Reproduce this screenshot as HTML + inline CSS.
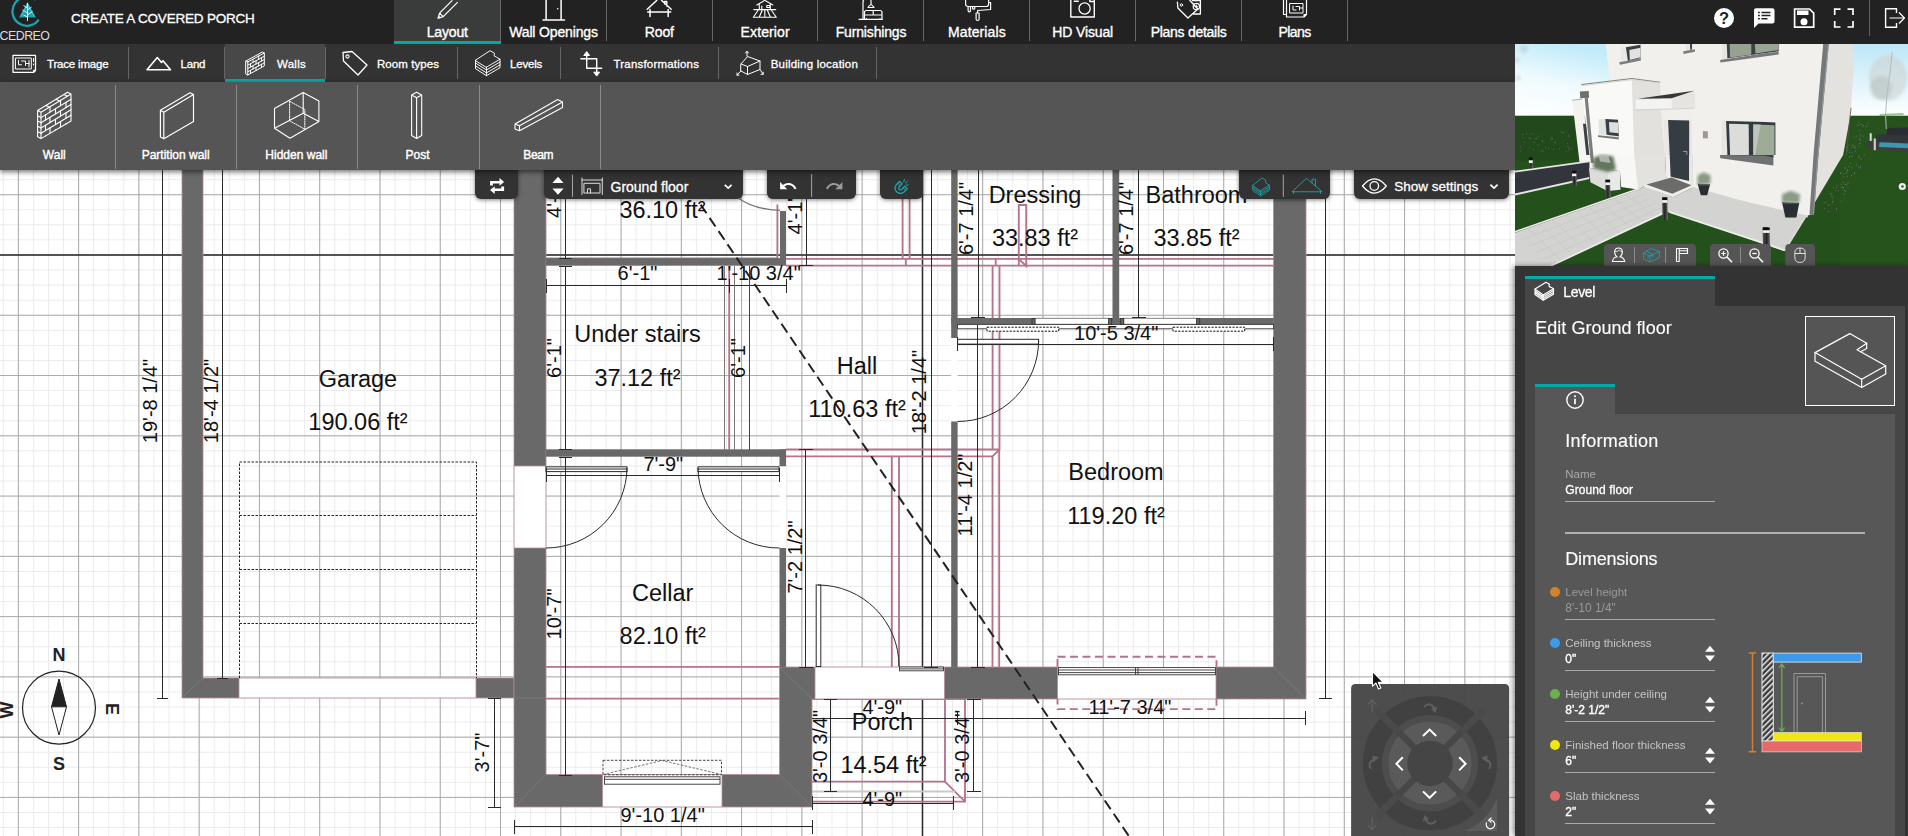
<!DOCTYPE html>
<html><head><meta charset="utf-8"><title>Cedreo</title>
<style>
*{box-sizing:border-box;margin:0;padding:0}
html,body{width:1908px;height:836px;overflow:hidden;background:#fff;font-family:"Liberation Sans",sans-serif;color:#fff}
.abs{position:absolute}
#top{position:absolute;left:0;top:0;width:1908px;height:44px;background:#222}
#bar2{position:absolute;left:0;top:44px;width:1515px;height:38px;background:#333}
#bar3{position:absolute;left:0;top:82px;width:1515px;height:88px;background:#555;box-shadow:0 2px 5px rgba(0,0,0,.55);z-index:5}
#canvas{position:absolute;left:0;top:170px;width:1515px;height:666px;background:#fff;overflow:hidden}
#view3d{position:absolute;left:1515px;top:44px;width:393px;height:222px;background:#cfe6f2;overflow:hidden;z-index:6}
#panel{position:absolute;left:1515px;top:266px;width:393px;height:570px;background:#333;box-shadow:-2px 0 5px rgba(0,0,0,.45);z-index:6}
.title{position:absolute;left:71px;top:10px;font-size:13.5px;line-height:17px;white-space:nowrap;letter-spacing:-0.2px;-webkit-text-stroke:0.3px #fff}
.tab{position:absolute;top:0;height:44px;width:106px;text-align:center}
.tab .lbl{position:absolute;left:-20px;right:-20px;top:23px;font-size:14px;line-height:18px;white-space:nowrap;text-align:center;letter-spacing:-0.15px;-webkit-text-stroke:0.35px #fff}
.tab.act{background:#3a3c3c;border-bottom:3px solid #00aaa5}
.sep{position:absolute;width:1px;background:#666}
.t2{position:absolute;top:0;height:38px}
.t2 .lbl{position:absolute;top:12px;font-size:11.5px;line-height:16px;white-space:nowrap;letter-spacing:-0.19px;-webkit-text-stroke:0.3px #fff}
.t2.act{background:#484848;border-bottom:3px solid #00aaa5}
.t3{position:absolute;top:0;height:88px;width:121px}
.t3 .lbl{position:absolute;left:0;right:0;top:65.5px;font-size:12px;line-height:15px;text-align:center;white-space:nowrap;-webkit-text-stroke:0.4px #fff}
svg{display:block;overflow:visible}
.ic{position:absolute;fill:none;stroke:#fff;stroke-width:1.2;stroke-linejoin:round;stroke-linecap:round}
.ftb{position:absolute;top:-6px;height:35.4px;background:#333;border-radius:0 0 6px 6px;box-shadow:0 1px 4px rgba(0,0,0,.5);z-index:2}
.pt{white-space:nowrap;-webkit-text-stroke:0.3px #fff}
.dot{position:absolute;left:1550px;width:10px;height:10px;border-radius:50%}
.fl{left:1565.3px;font-size:11.5px;line-height:14px;color:#c4c4c4;white-space:nowrap}
.fv{left:1565.3px;font-size:12px;line-height:14px;color:#fff;white-space:nowrap;-webkit-text-stroke:0.35px #fff}
.ul{position:absolute;left:1565px;width:150px;height:1px;background:#aaa}
.ft{white-space:nowrap;line-height:18px;-webkit-text-stroke:0.3px #fff;z-index:3}
</style></head><body>
<div id="top">
<svg class="abs" style="left:0;top:0" width="60" height="44" viewBox="0 0 60 44">
<path d="M35.8 -0.2A14.5 14.5 0 1 0 38.8 19.7" fill="none" stroke="#1aa3b0" stroke-width="2.3"/>
<path d="M27.5 2L19 17.5H36Z" fill="#1a9fb0"/>
<path d="M27.5 3V21M27.5 8L23.5 5.5M27.5 10L31.5 7M27.5 13L22.5 10M27.5 15L32.5 11.5M27.5 17L23.5 15" stroke="#e8e8e8" stroke-width="1" fill="none"/>
<path d="M27.5 4L21 16.5M27.5 4L34 16.5" stroke="#cfe" stroke-width=".5" fill="none" opacity=".7"/>
<text x="-0.5" y="40" font-size="13.6" fill="#ddd" font-family="Liberation Sans, sans-serif" letter-spacing="-0.55" textLength="50" lengthAdjust="spacingAndGlyphs" style="font-weight:normal">CEDREO</text>
</svg>

<div class="title">CREATE A COVERED PORCH</div>
<div class="tab act" style="left:394px;width:106.5px"><svg class="ic" style="left:0;top:0" width="106" height="44" viewBox="394 0 106 44"><path d="M438 18.3l1.6-5.2L452 0.7M438 18.3l5.2-1.7L457.5 2.3M439.6 13.1l3.6 3.5M438.6 16.3l1.6 1.5" /></svg><div class="lbl">Layout</div></div>
<div class="tab" style="left:500.5px"><svg class="ic" style="left:0;top:0" width="106" height="44" viewBox="500.5 0 106 44"><path d="M545.6 0V19.6M560.6 0V19.6M542.5 20H564" stroke-width="1.5"/><circle cx="557.2" cy="8.8" r=".8" fill="#fff" stroke="none"/></svg><div class="lbl">Wall Openings</div></div>
<div class="tab" style="left:606.3px"><svg class="ic" style="left:0;top:0" width="106" height="44" viewBox="606.3 0 106 44"><path d="M647.5 9.3L657 0.5M671.5 9.3L662 0.5M650.3 9.5V16.6M668.5 9.5V16.6M648 12H671M665 4V1.5H667V6" stroke-width="1.5"/></svg><div class="lbl">Roof</div></div>
<div class="tab" style="left:712.2px"><svg class="ic" style="left:0;top:0" width="106" height="44" viewBox="712.2 0 106 44"><path d="M754 9.6H776M753.5 17.2H776.5M753.5 17.2L758.5 10M776.5 17.2L771.5 10M759.5 17L762.5 10M770.5 17L767.5 10M765 17V10M757 5L765 0.3L773 5M759.5 4.5V9.5M770.5 4.5V9.5M762 6V9.5M767 5.5H770V7.5H767Z" stroke-width="1.1"/></svg><div class="lbl" style="letter-spacing:0.12px">Exterior</div></div>
<div class="tab" style="left:818px"><svg class="ic" style="left:0;top:0" width="106" height="44" viewBox="818 0 106 44"><path d="M859 19.3H882.5M863 19V2Q863 -1 866 -1M871 0V4.5M868 7.5Q871 2 874 7.5ZM864.5 18.5V12.5Q864.5 10.5 866.5 10.5H880Q882 10.5 882 12.5V18.5M864.5 15H882M873.2 10.5V15M866.5 18.5V19.3M880 18.5V19.3" stroke-width="1.2"/></svg><div class="lbl">Furnishings</div></div>
<div class="tab" style="left:923.9px"><svg class="ic" style="left:0;top:0" width="106" height="44" viewBox="923.9 0 106 44"><path d="M965.5 0V4Q965.5 6.5 968 6.5H986Q988.5 6.5 988.5 4V0M968 6.5V10.5Q968 11.8 969.2 11.8Q970.4 11.8 970.4 10.5V6.5M972.5 6.5V8.2Q972.5 9.2 973.6 9.2Q974.7 9.2 974.7 8.2V6.5M988.5 2.5H990.5V9.5L977.5 10.5V13M976 13H979V19Q979 20.5 977.5 20.5Q976 20.5 976 19Z" stroke-width="1.2"/></svg><div class="lbl" style="letter-spacing:0.11px">Materials</div></div>
<div class="tab" style="left:1029.7px"><svg class="ic" style="left:0;top:0" width="106" height="44" viewBox="1029.7 0 106 44"><path d="M1070.5 0V17H1094V0M1074 1.2H1078M1089.5 0V1.5H1094" stroke-width="1.4"/><circle cx="1084.3" cy="8.5" r="5.6" stroke-width="1.3"/></svg><div class="lbl">HD Visual</div></div>
<div class="tab" style="left:1135.6px"><svg class="ic" style="left:0;top:0" width="106" height="44" viewBox="1135.6 0 106 44"><path d="M1177 2.2L1177.5 8L1187.5 18L1197.5 9L1189.5 0.5M1192 0.5H1200V14H1193" stroke-width="1.3"/><circle cx="1181" cy="5" r="1.2" stroke-width="1"/><circle cx="1196" cy="6.5" r="3.2" stroke-width="1.2"/><path d="M1196 5v3M1194.5 6.5h3" stroke-width=".9"/></svg><div class="lbl" style="letter-spacing:-0.27px">Plans details</div></div>
<div class="tab" style="left:1241.5px"><svg class="ic" style="left:0;top:0" width="106" height="44" viewBox="1241.5 0 106 44"><path d="M1283 0V14.5H1286M1286 0.5V17H1303.5L1306 14.5V0.5M1303.5 17V14.5H1306" stroke-width="1.2"/><path d="M1289.5 3.5H1302.5V13H1289.5ZM1292.5 6V10H1295.5M1295.5 6.5H1299V10M1299 8H1302" stroke-width="1"/></svg><div class="lbl" style="letter-spacing:-0.57px">Plans</div></div>
<div class="sep" style="left:500px;top:0;height:41px"></div>
<div class="sep" style="left:606px;top:0;height:41px"></div>
<div class="sep" style="left:712px;top:0;height:41px"></div>
<div class="sep" style="left:817px;top:0;height:41px"></div>
<div class="sep" style="left:923px;top:0;height:41px"></div>
<div class="sep" style="left:1029px;top:0;height:41px"></div>
<div class="sep" style="left:1135px;top:0;height:41px"></div>
<div class="sep" style="left:1241px;top:0;height:41px"></div>
<div class="sep" style="left:1347px;top:0;height:41px"></div>

<svg class="abs" style="left:1700px;top:0" width="208" height="44" viewBox="1700 0 208 44">
<circle cx="1724" cy="18" r="10" fill="#fff"/>
<text x="1724" y="24" font-size="16.5" font-weight="bold" fill="#222" text-anchor="middle" font-family="Liberation Sans, sans-serif">?</text>
<path d="M1756 8.2H1772.5Q1774.5 8.2 1774.5 10.2V21.5Q1774.5 23.5 1772.5 23.5H1758.5L1754 28V10.2Q1754 8.2 1756 8.2Z" fill="#fff"/>
<path d="M1758 12.5h1.8M1761.5 12.5h9M1758 15.6h1.8M1761.5 15.6h9M1758 18.7h1.8M1761.5 18.7h6" stroke="#222" stroke-width="1.5" fill="none"/>
<path d="M1794.6 9H1809.5L1813.7 13.2V27.2H1794.6Z" fill="none" stroke="#fff" stroke-width="1.7"/>
<rect x="1797" y="10.5" width="11.5" height="4.5" fill="#fff"/>
<circle cx="1804" cy="21.8" r="3.5" fill="#fff"/>
<path d="M1834.7 15V9.2H1840.5M1847.5 9.2H1853V15M1853 21V27H1847.5M1840.5 27H1834.7V21" fill="none" stroke="#fff" stroke-width="1.7"/>
<path d="M1869.6 0V36" stroke="#666" stroke-width="1"/>
<path d="M1896.5 13V8.8H1885.6V27.3H1896.5V23" fill="none" stroke="#fff" stroke-width="1.4"/>
<path d="M1889.5 18H1904M1899 12.5L1904.5 18L1899 23.5" fill="none" stroke="#fff" stroke-width="1.2"/>
</svg>

</div>
<div id="bar2">
<div class="t2 act" style="left:224.5px;width:100.3px"></div>
<svg class="ic" style="left:0;top:0" width="1515" height="38" viewBox="0 44 1515 38">
<!-- trace image -->
<path d="M13 55.3H35.5V70.5L33.7 72.3H13Z M33.7 72.3V70.5H35.5" stroke-width="1.3"/>
<path d="M15.8 58H31.3V69H15.8ZM18.5 60.5V64.8H21.5M21.5 61H25.5V65.5M25.5 63.5H29M29 60.5V67" stroke-width="1"/>
<path d="M33.5 58.5v3M33.5 64v1" stroke-width="1"/>
<!-- land -->
<path d="M147 69.8L157.3 57.5L161.5 62.5L163 60.8L170.5 69.8Z" stroke-width="1.6"/>
<!-- walls (brick) -->
<g stroke-width="1">
<path d="M246 61L262.5 52L264.3 53V66L247.8 75L246 74ZM247.8 62V75M247.8 62L264.3 53M246 61L247.8 62"/>
<path d="M247.8 65.2L264.3 56.2M247.8 68.5L264.3 59.5M247.8 71.8L264.3 62.8M253 59.2V62.4M258.7 56V59.2M250.5 63.8V67M256 60.8V64M261.5 57.8V61M253 65.8V69M258.7 62.7V66M250.5 70.4V73.6M256 67.3V70.6M261.5 64.3V67.6"/>
</g>
<!-- room types tag -->
<path d="M343 52.5L352 51.5L367 65L358 75L343.5 61Z" stroke-width="1.3"/><circle cx="347.5" cy="56.5" r="1.6" stroke-width="1.1"/>
<!-- levels -->
<g stroke-width="0.95" transform="translate(0,-1.3)">
<path d="M475.5 61.5L490 52L494.5 54.5Q492.5 57.5 496.5 58.5L500 60.5L486.5 68.5Z"/>
<path d="M475.5 61.5V70L486.5 77L500 69V60.5M486.5 68.5V77M475.5 64.3L486.5 71.3L500 63.3M475.5 67.2L486.5 74.2L500 66.2"/>
</g>
<!-- transformations -->
<g stroke-width="1.4">
<path d="M586.7 54.5V68.3H601.7M580.8 58.7H596.7V73.5"/>
<path d="M584 55.2L586.7 51.6L589.4 55.2Z" fill="#fff" stroke-width="1"/>
<path d="M594 72.5L596.7 76.1L599.4 72.5Z" fill="#fff" stroke-width="1"/>
</g>
<!-- building location -->
<g stroke-width="1">
<path d="M741 64L747.5 56.5L760 61V69.5L747.5 74.5L741 71ZM741 64L747.5 66.5V74.5M747.5 66.5L760 61M747.5 56.5"/>
<path d="M747 56V51.5M745.5 53L747 51.2L748.5 53M741 71L737 75M737 73V75.2H739M760 69.5L763 74M761 74.3H763.2V72.2"/>
</g>
</svg>
<div class="t2" style="left:0"><div class="lbl" style="left:47px">Trace image</div></div>
<div class="t2" style="left:0"><div class="lbl" style="left:180.5px">Land</div></div>
<div class="t2" style="left:0"><div class="lbl" style="left:277px;letter-spacing:0.26px">Walls</div></div>
<div class="t2" style="left:0"><div class="lbl" style="left:377px;letter-spacing:0.06px">Room types</div></div>
<div class="t2" style="left:0"><div class="lbl" style="left:510px">Levels</div></div>
<div class="t2" style="left:0"><div class="lbl" style="left:613.5px;letter-spacing:0.20px">Transformations</div></div>
<div class="t2" style="left:0"><div class="lbl" style="left:770.7px;letter-spacing:0.21px">Building location</div></div>
<div class="sep" style="left:127.5px;top:3px;height:32px"></div>
<div class="sep" style="left:224px;top:3px;height:32px"></div>
<div class="sep" style="left:324.5px;top:3px;height:32px"></div>
<div class="sep" style="left:457.3px;top:3px;height:32px"></div>
<div class="sep" style="left:560.4px;top:3px;height:32px"></div>
<div class="sep" style="left:718px;top:3px;height:32px"></div>
<div class="sep" style="left:876px;top:3px;height:32px"></div>

</div>
<div id="bar3">
<svg class="ic" style="left:0;top:0" width="1515" height="88" viewBox="0 82 1515 88">
<!-- wall -->
<g stroke-width="1.1">
<path d="M37.6 110.5L67.6 92.3L71 94V121L41 138.6L37.6 136.8ZM41 112.3V138.6M41 112.3L71 94M37.6 110.5L41 112.3"/>
<path d="M41 117.6L71 99.3M41 122.8L71 104.5M41 128L71 109.8M41 133.3L71 115.2"/>
<path d="M50 106.8V112M60.5 100.5V105.7M45.5 114.8V120M55.5 108.7V114M66 102.4V107.6M50 117.3V122.6M60.5 111V116.2M45.5 125.3V130.6M55.5 119.2V124.5M66 112.8V118M50 127.8V133M60.5 121.5V126.7M45.5 135.7V136M55.5 129.7V130M66 123.4V124"/>
<path d="M37.6 115.8L41 117.6M37.6 121L41 122.8M37.6 126.2L41 128M37.6 131.5L41 133.3M46 105.4L49.4 107.2M56 99.3L59.5 101M64 94.5L67.4 96.2"/>
</g>
<!-- partition wall -->
<g stroke-width="1.2">
<path d="M160.4 110.3L190 92.8L193.5 94.6V121.5L163.8 138.8L160.4 137ZM163.8 112.2V138.8M163.8 112.2L193.5 94.6M160.4 110.3L163.8 112.2"/>
</g>
<!-- hidden wall -->
<g stroke-width="1.1">
<path d="M303.2 92.4L274.5 108.4V128.2L290 138.3L318.9 121.6V100.9ZM303.2 92.4V113.2L274.5 128.2M303.2 113.2L318.9 121.6"/>
<path d="M289.6 101.3L304.8 109.5V129.2L289.6 120.8Z" stroke-dasharray="1.2 1.2" stroke-width="1"/>
</g>
<!-- post -->
<g stroke-width="1.1">
<path d="M411.6 95L416.6 92.2L421.7 95V135.6L416.6 138.5L411.6 135.6ZM411.6 95L416.6 97.8L421.7 95M416.6 97.8V138.5"/>
</g>
<!-- beam -->
<g stroke-width="1.1">
<path d="M515 124L557.7 99.6L562.5 102V107.5L519.5 130.7L515 129ZM515 124L519.5 125.8V130.7M519.5 125.8L562.5 102"/>
</g>
</svg>
<div class="t3" style="left:-6.2px"><div class="lbl">Wall</div></div>
<div class="t3" style="left:115.2px"><div class="lbl">Partition wall</div></div>
<div class="t3" style="left:235.9px"><div class="lbl">Hidden wall</div></div>
<div class="t3" style="left:357px"><div class="lbl">Post</div></div>
<div class="t3" style="left:477.7px"><div class="lbl" style="letter-spacing:-0.4px">Beam</div></div>
<div class="sep" style="left:115.3px;top:3px;height:84px;background:#8a8a8a"></div>
<div class="sep" style="left:236.3px;top:3px;height:84px;background:#8a8a8a"></div>
<div class="sep" style="left:357.4px;top:3px;height:84px;background:#8a8a8a"></div>
<div class="sep" style="left:478.5px;top:3px;height:84px;background:#8a8a8a"></div>
<div class="sep" style="left:599.5px;top:3px;height:84px;background:#8a8a8a"></div>

</div>
<div id="canvas">
<svg width="1515" height="666" viewBox="0 170 1515 666" style="position:absolute;left:0;top:0" font-family="Liberation Sans, sans-serif">
<defs>
<pattern id="gmin" patternUnits="userSpaceOnUse" x="921.9" y="254.5" width="15.0675" height="15.0675">
<path d="M0.5 0V15.07M0 0.5H15.07" stroke="#ebebeb" stroke-width="1" fill="none"/>
</pattern>
<pattern id="gmed" patternUnits="userSpaceOnUse" x="921.9" y="254.5" width="60.27" height="60.27">
<path d="M0.5 0V60.27M0 0.5H60.27" stroke="#a9a9a9" stroke-width="1" fill="none"/>
</pattern>
</defs>
<rect x="0" y="170" width="1515" height="666" fill="#fff"/>
<rect x="0" y="170" width="1515" height="666" fill="url(#gmin)"/>
<rect x="0" y="170" width="1515" height="666" fill="url(#gmed)"/>
<path d="M0 254.9H1515M922.5 170V836" stroke="#2b2b2b" stroke-width="1.5" fill="none"/>

<!-- ghost (pink) lines of other level -->
<g stroke="#b3748b" stroke-width="1.85" fill="none">
<path d="M786 258.8H1274M786 265.6H1274"/>
<path d="M902.6 170V258.8M909.6 170V258.8M905.8 258.8V265.6M995.7 258.8V265.6M777.4 204.6V258.4H546"/>
<path d="M992.6 265.6V450M999.5 265.6V450"/>
<path d="M1018.8 266V205H1026.2V266L1018.8 259"/>
<path d="M786 449.5H1000M786 456.3H992.5L999.5 449.5"/>
<path d="M891.8 456.3V667M899 456.3V667"/>
<path d="M992.5 456.3V667M999.2 449.5V667"/>
<path d="M729.2 266V449.5"/>
<path d="M546 666.8H779.5M546 698.6H779.5"/>
<path d="M812 699H965V801.6H812"/>
<path d="M812 781.6H945V699"/>
<path d="M945 781.6L965 801.6"/>
<path d="M812 791.5H955" stroke="#c9c9c9"/>
</g>
<rect x="1057.5" y="656.8" width="159" height="52.3" fill="none" stroke="#b3748b" stroke-width="1.9" stroke-dasharray="8 4.5"/>

<g fill="#fff"><rect x="514" y="466" width="32" height="82"/><rect x="239" y="678" width="237" height="20"/><rect x="602.5" y="774.5" width="119.5" height="32.5"/><rect x="815" y="667" width="129.5" height="32"/><rect x="1057.5" y="667" width="158.5" height="32"/><rect x="779.5" y="466" width="6.5" height="82"/><rect x="951.2" y="338" width="6.4" height="83.5"/></g>
<!-- walls -->
<g fill="#696969" stroke="#b88a9a" stroke-width="0.8">
<!-- garage left + bottom -->
<path d="M182 165H203V678H239V698H182Z"/>
<path d="M476 678H514V698H476Z"/>
<!-- centre wall -->
<path d="M514 165H546V466H514Z"/>
<path d="M514 548H546V774.5H602.5V807H514Z"/>
<!-- cellar bottom right + right thick wall + hall bottom piece -->
<path d="M722 774.5H779.5V667H815V699H812V807H722Z"/>
<!-- hall/bedroom bottom -->
<path d="M944.5 667H1057.5V699H944.5Z"/>
<path d="M1216 667H1273.5V165H1306V699H1216Z"/>
</g>
<g fill="#696969" stroke="none">
<!-- thin interior walls -->
<path d="M546 258H786V211H780V258.5H546Z"/>
<rect x="546" y="258.3" width="240" height="7.4"/>
<rect x="780" y="211" width="6" height="54"/>
<rect x="546" y="449.3" width="240" height="7.4"/>
<rect x="779.5" y="449.3" width="6.5" height="17"/>
<rect x="779.5" y="548" width="6.5" height="119"/>
<rect x="951.2" y="165" width="6.4" height="173"/>
<rect x="951.2" y="421.5" width="6.4" height="246"/>
<rect x="1112.5" y="165" width="6.7" height="159"/>
<rect x="951.2" y="318" width="84" height="6.4"/>
<rect x="1108.7" y="318" width="15" height="6.4"/>
<rect x="1196.7" y="318" width="77" height="6.4"/>
</g>
<path d="M239 678H476M239 698H476M514 466V548M546 466V548M602.5 774.5H722M602.5 807H722M815 667H944.5M815 699H944.5M1057.5 699H1216" stroke="#b88a9a" stroke-width="0.9" fill="none"/>
<!-- wall joints -->
<g stroke="#7c7c7c" stroke-width="0.8" fill="none">
<path d="M182 698L203 678M514 807L546 774.5M812 807L779.5 774.5M1306 699L1273.5 667M779.5 667L812 699M514 678V698M514 698H546"/>
</g>

<!-- openings: garage door -->
<g fill="none" stroke="#222" stroke-width="1" stroke-dasharray="2.5 1.5">
<path d="M239.5 678V462H476.5V678M239.5 515.5H476.5M239.5 569.5H476.5M239.5 623.5H476.5"/>
</g>
<!-- cellar window -->
<g fill="none" stroke="#333" stroke-width="0.9">
<rect x="603" y="760.3" width="118.5" height="14.5" stroke-dasharray="2.5 1.5"/>
<path d="M603 774.5L662 760.5L721.5 774.5" stroke-dasharray="2.5 1.5" stroke="#666"/>
<rect x="604.5" y="776.8" width="115.5" height="7.4" fill="#fff"/>
<path d="M604.5 779.3H720"/>
</g>
<!-- bedroom window -->
<g fill="#fff" stroke="#333" stroke-width="0.9">
<rect x="1058.5" y="667.6" width="157" height="7.2"/>
<path d="M1058.5 670H1215.5M1058.5 672.6H1215.5M1135.5 667.6V674.8M1138 667.6V674.8" fill="none"/>
</g>
<!-- small hall door/window element -->
<g fill="#fff" stroke="#333" stroke-width="0.9">
<rect x="899.5" y="667" width="44" height="3.8"/>
<path d="M899.5 668.9H943.5" fill="none"/>
</g>
<!-- doors -->
<g fill="#fff" stroke="#2a2a2a" stroke-width="1">
<rect x="546" y="466.8" width="81" height="4.8"/>
<path d="M546 469H627" fill="none"/>
<path d="M627 468A81 81 0 0 1 546 548" fill="none"/>
<rect x="698" y="466.8" width="81" height="4.8"/>
<path d="M698 469H779" fill="none"/>
<path d="M698 468A81 81 0 0 0 779.5 548" fill="none"/>
<rect x="816.2" y="585" width="4.6" height="81.5"/>
<path d="M818 585A81 81 0 0 1 899 666.5" fill="none"/>
<rect x="957.6" y="339.3" width="81" height="4.8"/>
<path d="M1038.6 340A81 81 0 0 1 957.6 421.5" fill="none"/>
<path d="M739 198.5Q754 209.5 780 210.3" fill="none" stroke="#777" stroke-width="1.3"/>
</g>
<!-- sliding doors in dressing/bath wall -->
<g fill="#fff" stroke="#333" stroke-width="0.9">
<rect x="1035" y="318.3" width="73.7" height="6" stroke="#777"/>
<rect x="1123.7" y="318.3" width="73" height="6" stroke="#777"/>
<rect x="957.6" y="324.4" width="316" height="4.4"/>
<rect x="987" y="327.2" width="71.7" height="4" stroke="#111" stroke-dasharray="2.2 1.3" stroke-width="1"/>
<rect x="1173" y="327.2" width="71.7" height="4" stroke="#111" stroke-dasharray="2.2 1.3" stroke-width="1"/>
<rect x="1032" y="318.5" width="3" height="5.8" fill="#696969"/>
<rect x="1108.7" y="318.5" width="3" height="5.8" fill="#696969"/>
<rect x="1120.7" y="318.5" width="3" height="5.8" fill="#696969"/>
<rect x="1196.7" y="318.5" width="3" height="5.8" fill="#696969"/>
</g>

<!-- dimension lines -->
<g stroke="#2a2a2a" stroke-width="1" fill="none" shape-rendering="crispEdges">
<path d="M162.5 170V698M157 698H168"/>
<path d="M222.5 170V678M217 678H228"/>
<path d="M565.5 170V258M559 258H572M565.5 266V449.3M559 266H572M559 449.3H572M565.5 457V775M559 457H572M559 775H572"/>
<path d="M546 285.6H786.6M546 279V292.6M729.2 279V292.6M786.6 279V292.6"/>
<path d="M806 170V265.6M799 265.6H813"/>
<path d="M749.3 266V449.5" stroke="#444" stroke-width="1.3"/>
<path d="M724.7 266V449.5M734 266V449.5" stroke="#777"/>
<path d="M931 170V667M924 667H938"/>
<path d="M978 170V317.5M971 317.5H985"/>
<path d="M1138.8 170V317.5M1132 317.5H1146"/>
<path d="M957.6 344.3H1273.7M957.6 337V351M1273.7 337V351"/>
<path d="M546 475H779.5M546 468V482M779.5 468V482"/>
<path d="M805.8 449.5V667M799 449.5H813M799 667H813"/>
<path d="M977.5 325V667M971 667H985"/>
<path d="M1325.5 170V698M1319 698H1332"/>
<path d="M494.5 698.5V807M488 698.5H501M488 807H501"/>
<path d="M514 826.5H812M514 819.5V833.5M812 819.5V833.5"/>
<path d="M812 718.4H1305.5M1305.5 711V725M957 711V725"/>
<path d="M830.7 699V791M824 699H837M824 791H837"/>
<path d="M973.5 699V791M967 699H981M967 791H981"/>
<path d="M812 803H953.5M953.5 796V810M812 796V810"/>
</g>
<path d="M700.6 204.6L1128.8 836" stroke="#222" stroke-width="2" stroke-dasharray="10.5 5.5" fill="none"/>

<!-- labels -->
<g fill="#111" font-size="23.5" text-anchor="middle">
<text x="358" y="386.5">Garage</text><text x="358" y="429.5">190.06 ft²</text>
<text x="662.5" y="217.5">36.10 ft²</text>
<text x="637.5" y="342">Under stairs</text><text x="637.5" y="385.5">37.12 ft²</text>
<text x="857" y="373.5">Hall</text><text x="857" y="416.5">110.63 ft²</text>
<text x="1035" y="203">Dressing</text><text x="1035" y="246">33.83 ft²</text>
<text x="1196.5" y="203">Bathroom</text><text x="1196.5" y="246">33.85 ft²</text>
<text x="1116" y="479.5">Bedroom</text><text x="1116" y="524">119.20 ft²</text>
<text x="662.7" y="601">Cellar</text><text x="662.7" y="643.7">82.10 ft²</text>
<text x="882.5" y="729.5">Porch</text><text x="883.5" y="773">14.54 ft²</text>
</g>
<g fill="#111" font-size="20" text-anchor="middle">
<text x="637.5" y="280.4">6'-1"</text>
<text x="758.6" y="280.4">1'-10 3/4"</text>
<text x="1116.2" y="340">10'-5 3/4"</text>
<text x="663.3" y="471">7'-9"</text>
<text x="882.3" y="713.5">4'-9"</text>
<text x="882.3" y="806">4'-9"</text>
<text x="662.6" y="821.7">9'-10 1/4"</text>
<text x="1130" y="714.3">11'-7 3/4"</text>
<text transform="translate(157,401) rotate(-90)">19'-8 1/4"</text>
<text transform="translate(218,401) rotate(-90)">18'-4 1/2"</text>
<text transform="translate(560.5,198) rotate(-90)">4'-1"</text>
<text transform="translate(802,214.5) rotate(-90)">4'-1"</text>
<text transform="translate(560.5,358) rotate(-90)">6'-1"</text>
<text transform="translate(744.7,358) rotate(-90)">6'-1"</text>
<text transform="translate(925.5,392) rotate(-90)">18'-2 1/4"</text>
<text transform="translate(972.5,218.5) rotate(-90)">6'-7 1/4"</text>
<text transform="translate(1133.3,218.5) rotate(-90)">6'-7 1/4"</text>
<text transform="translate(972,495) rotate(-90)">11'-4 1/2"</text>
<text transform="translate(801.5,557) rotate(-90)">7'-2 1/2"</text>
<text transform="translate(560.5,614) rotate(-90)">10'-7"</text>
<text transform="translate(489,752.5) rotate(-90)">3'-7"</text>
<text transform="translate(827,746.5) rotate(-90)">3'-0 3/4"</text>
<text transform="translate(969,746.5) rotate(-90)">3'-0 3/4"</text>
</g>

<!-- compass -->
<g>
<circle cx="59" cy="707.7" r="36.5" fill="none" stroke="#222" stroke-width="1.2"/>
<path d="M59 679L51.5 706.8H66.5Z" fill="#222" stroke="#222" stroke-width="1"/>
<path d="M59 735L51.5 706.8H66.5Z" fill="#fff" stroke="#222" stroke-width="1"/>
<g font-size="18" font-weight="bold" fill="#222" text-anchor="middle">
<text x="59" y="661">N</text><text x="59" y="770">S</text>
<text transform="translate(106,709) rotate(90)">E</text>
<text transform="translate(13,710) rotate(-90)">W</text>
</g>
</g>
</svg>
<!-- floating toolbars -->
<div class="ftb" style="left:475.3px;width:43px"></div>
<div class="ftb" style="left:543.5px;width:199.5px"></div>
<div class="ftb" style="left:767px;width:88.7px"></div>
<div class="ftb" style="left:880.3px;width:43px"></div>
<div class="ftb" style="left:1239.3px;width:90.5px"></div>
<div class="ftb" style="left:1354.3px;width:154.7px"></div>
<svg class="abs" style="left:0;top:0;z-index:3" width="1515" height="40" viewBox="0 170 1515 40" fill="none" stroke="#fff" stroke-linecap="round" stroke-linejoin="round">
<!-- swap -->
<path d="M490.1 181.1H499.5V178L504.1 181.9L499.5 185.8V183.4H492.9V185.6H490.1ZM504.1 190.9H494.7V194L490.1 190.1L494.7 186.2V188.6H501.3V186.4H504.1Z" fill="#fff" stroke="none"/>
<!-- level selector -->
<path d="M558 176.8L563.6 183H552.4ZM558 194.7L563.6 188.5H552.4Z" fill="#fff" stroke="none"/>
<path d="M572.5 175V196.5" stroke="#a5a5a5" stroke-width="1"/>
<g stroke-width="1" stroke="#ddd"><path d="M582 178V194.5M602.3 178V194.5M582 180H602.3M584.3 183.3H600V193H584.3ZM587.5 193V188.8H590.5V193"/></g>
<path d="M724.8 184.8L728.2 188.2L731.6 184.8" stroke-width="1.7" stroke-linecap="butt"/>
<!-- undo / redo -->
<path transform="translate(778.5,176.5) scale(0.8)" d="M12.5 8c-2.65 0-5.05.99-6.9 2.6L2 7v9h9l-3.62-3.62c1.39-1.16 3.16-1.88 5.12-1.88 3.54 0 6.55 2.31 7.6 5.5l2.37-.78C21.08 11.03 17.15 8 12.5 8z" fill="#fff" stroke="none"/>
<path d="M811.6 174.5V196.5" stroke="#a5a5a5" stroke-width="1"/>
<path transform="translate(824.8,176.5) scale(0.8)" d="M18.4 10.6C16.55 8.99 14.15 8 11.5 8c-4.65 0-8.58 3.03-9.96 7.22L3.9 16c1.05-3.19 4.05-5.5 7.6-5.5 1.95 0 3.73.72 5.12 1.88L13 16h9V7l-3.6 3.6z" fill="#999" stroke="none"/>
<!-- magnet -->
<g stroke="#1aa5ad" stroke-width="1.3">
<path d="M899.5 181.5L896.3 184.8Q893.5 188.5 896.7 191.8Q900.2 195 904 192L907.2 188.8L904.7 186.3L901.6 189.4Q900.2 190.5 899.1 189.3Q898 188 899.2 186.8L902.2 183.9Z"/>
<path d="M897.8 183.3L900.5 185.8M903.2 188L905.7 190.4M904.5 179.5L903.5 182M907.5 181.2L905.3 183M908.3 184.8L906 185.2" stroke-width="1"/>
</g>
<!-- layers (teal) -->
<g stroke="#1aa5ad" stroke-width="0.8">
<path d="M1252.8 185.3L1262 178L1266 180.3Q1264 182.8 1267 183.6L1269.4 185L1260.5 190.5Z"/>
<path d="M1252.8 185.3V190.5L1260.5 195.8L1269.4 190.3V185M1260.5 190.5V195.8M1252.8 187L1260.5 192.3L1269.4 186.8M1252.8 188.8L1260.5 194L1269.4 188.6"/>
</g>
<path d="M1283.3 175V196.5" stroke="#a5a5a5" stroke-width="1"/>
<!-- roof (teal) -->
<g stroke="#1aa5ad" stroke-width="0.9">
<path d="M1292.3 191.5L1306.5 178.3L1321.7 191.5ZM1312 183V179.2H1315.5V186.2M1293.5 191.5V193.5M1320.5 191.5V193.5"/>
</g>
<!-- eye -->
<g stroke-width="1.3"><path d="M1362.5 186Q1374.3 171.8 1386.3 186Q1374.3 200.2 1362.5 186Z"/><circle cx="1374.3" cy="186" r="4.3"/></g>
<path d="M1490.4 184.6L1494 188.2L1497.6 184.6" stroke-width="1.7" stroke-linecap="butt"/>
</svg>
<div class="abs ft" style="left:610.5px;top:8px;font-size:14px">Ground floor</div>
<div class="abs ft" style="left:1394.3px;top:8.3px;font-size:13.5px">Show settings</div>
<!-- nav widget -->
<svg class="abs" style="left:1340px;top:500px;z-index:3" width="175" height="166" viewBox="1340 670 175 166">
<defs><clipPath id="navc"><rect x="1351" y="684" width="158.2" height="152"/></clipPath></defs>
<path d="M1351.1 836V688.5Q1351.1 684 1355.6 684H1504.6Q1509.1 684 1509.1 688.5V836Z" fill="#474747" opacity=".97"/>
<g clip-path="url(#navc)">
<path d="M1363 696H1398Q1370 708 1363 733Z" fill="#4d4d4d"/>
<path d="M1363 831H1398Q1370 819 1363 794Z" fill="#4d4d4d"/>
<path d="M1497 831V798Q1488 822 1464 831Z" fill="#5b5b5b"/>
<circle cx="1430" cy="763.3" r="67" fill="#4a4a4a"/>
<circle cx="1430" cy="763.3" r="57.5" fill="none" stroke="#414141" stroke-width="19"/>
<circle cx="1430" cy="763.3" r="45" fill="none" stroke="#4d4d4d" stroke-width="6"/>
<path d="M1377 710.3L1483 816.3M1483 710.3L1377 816.3" stroke="#4a4a4a" stroke-width="7"/>
<circle cx="1430" cy="763.3" r="32.2" fill="none" stroke="#5a5a5a" stroke-width="19.2"/>
<path d="M1398 731.3L1462 795.3M1462 731.3L1398 795.3" stroke="#474747" stroke-width="6.5"/>
<circle cx="1430" cy="763.3" r="22.6" fill="#454545"/>
<g fill="none" stroke="#fff" stroke-width="2">
<path d="M1423 736L1429.6 729.6L1436.2 736"/><path d="M1423 791.4L1429.6 797.8L1436.2 791.4"/>
<path d="M1402.8 757.2L1396.4 763.8L1402.8 770.4"/><path d="M1459.2 757.2L1465.6 763.8L1459.2 770.4"/>
</g>
<g fill="none" stroke="#5f5f5f" stroke-width="1.3">
<path d="M1372.2 712V700M1368 704.2L1372.2 700L1376.4 704.2"/>
<path d="M1372.2 817.5V829.5M1368 825.3L1372.2 829.5L1376.4 825.3"/>
<path d="M1424 707Q1430 701 1434 708" stroke-width="2"/><path d="M1431 709L1435.5 713L1437.5 706.5Z" fill="#5f5f5f" stroke="none"/>
<path d="M1436 821Q1430 827 1426 820" stroke-width="2"/><path d="M1429 819L1424.5 815L1422.5 821.5Z" fill="#5f5f5f" stroke="none"/>
<path d="M1371 769Q1367 763 1374 759.5" stroke-width="2"/><path d="M1373 762.5L1379 757.5L1372.5 755.5Z" fill="#5f5f5f" stroke="none"/>
<path d="M1489 769Q1493 763 1486 759.5" stroke-width="2"/><path d="M1487 762.5L1481 757.5L1487.5 755.5Z" fill="#5f5f5f" stroke="none"/>
</g>
<path d="M1486.6 822.6A4.3 4.3 0 1 0 1490.3 820.2" fill="none" stroke="#fff" stroke-width="1.2"/><path d="M1491.5 817.8L1488.6 820.3L1491.5 822.6" fill="none" stroke="#fff" stroke-width="1.2"/>
</g>
</svg>
<!-- cursor -->
<svg class="abs" style="left:1370px;top:500px;z-index:4" width="16" height="22" viewBox="0 0 16 22"><path d="M2.5 1.5V16.2L6 13L8.5 19L10.8 18L8.3 12.2H13Z" fill="#111" stroke="#fff" stroke-width="1.1" stroke-linejoin="round"/></svg>

</div>
<div id="view3d">
<svg class="abs" style="left:0;top:0" width="393" height="222" viewBox="0 0 393 222">
<defs>
<linearGradient id="sky" x1="0" y1="1" x2="0.35" y2="0"><stop offset="0" stop-color="#ffffff"/><stop offset="0.5" stop-color="#f1fbfe"/><stop offset="1" stop-color="#c2ebf9"/></linearGradient>
<linearGradient id="sky2" x1="0" y1="0" x2="0" y2="1"><stop offset="0" stop-color="#bce7f8"/><stop offset="1" stop-color="#ffffff"/></linearGradient>
<linearGradient id="lamp" x1="0" y1="0" x2="1" y2="0"><stop offset="0" stop-color="#555"/><stop offset="0.5" stop-color="#222"/><stop offset="1" stop-color="#777"/></linearGradient>
<filter id="b1"><feGaussianBlur stdDeviation="0.5"/></filter>
<filter id="b2"><feGaussianBlur stdDeviation="1.6"/></filter>
</defs>
<rect width="393" height="222" fill="#24501c"/>
<rect width="120" height="72" fill="url(#sky)"/>
<rect x="330" width="63" height="72" fill="url(#sky2)"/>
<g filter="url(#b1)">
<rect x="0" y="71.7" width="62" height="45" fill="#244a1b"/>
<rect x="325" y="71.7" width="68" height="150.3" fill="#27531e"/>
<g fill="#b9c0c0" opacity=".45" filter="url(#b2)"><circle cx="9" cy="5" r="4"/><circle cx="2" cy="16" r="2.5"/><circle cx="3" cy="34" r="2.5"/></g>
<g filter="url(#b2)"><ellipse cx="373" cy="34" rx="19" ry="23" fill="#cfd6d5" opacity=".7"/><ellipse cx="366" cy="44" rx="11" ry="12" fill="#b4bdbb" opacity=".5"/></g>
<polyline points="371.3,85.0 370.6,71.7 371.9,50.5 375.3,26.6 377.2,8.0" fill="none" stroke="#b4bab9" stroke-width="1" />
<polyline points="364.6,71.0 388.5,70.1" fill="none" stroke="#6fae6a" stroke-width="2" opacity=".7"/>
<polygon points="352.7,96.9 393.0,98.9 393.0,108.2 352.7,104.9" fill="#3a3d3f" />
<polygon points="364.6,98.2 393.0,99.6 393.0,104.2 364.0,102.9" fill="#3f97ab" />
<polygon points="361.3,90.3 393.0,91.6 393.0,98.9 361.3,96.9" fill="#33363a" />
<polygon points="372.6,83.9 393.0,83.4 393.0,91.6 371.3,90.9" fill="#2b2e31" />
<polygon points="354.7,89.2 356.7,89.2 356.7,96.9 354.7,96.9" fill="#ddd" />
<polygon points="358.7,94.5 360.9,94.5 360.9,106.2 358.7,106.2" fill="#ccc" />
<polygon points="176.6,140.9 250.0,160.4 292.9,169.4 292.9,173.4 250.0,165.4 176.6,145.5" fill="#d3d3d1" />
<polygon points="90.9,0.0 250.0,0.0 309.5,0.0 296.7,170.7 291.6,171.4 200.0,150.8 177.9,142.9 177.9,111.0 94.3,111.0 94.3,34.5" fill="#f1f0ec" />
<polygon points="312.9,0.0 337.4,0.0 338.7,23.9 335.4,71.7 328.1,111.0 298.9,160.1 298.2,169.4" fill="#e3e2de" />
<polyline points="336.1,63.7 334.8,74.3 331.4,111.0" fill="none" stroke="#555" stroke-width="0.8" />
<polygon points="308.2,0.0 313.9,0.0 303.6,111.0 298.9,170.7 294.5,170.7 298.5,111.0" fill="#747878" />
<polyline points="313.3,0.0 302.9,111.0 298.5,170.7" fill="none" stroke="#9a9e9e" stroke-width="0.9" />
<polygon points="105.5,3.3 125.5,0.0 125.5,14.6 105.5,18.6" fill="#e9e8e4" />
<polygon points="110.9,3.3 125.5,0.7 125.5,13.9 112.9,17.3" fill="#3a4045" />
<polygon points="114.4,6.0 125.5,3.7 125.5,13.3 114.8,15.9" fill="#e2e2e0" />
<polygon points="104.2,18.3 125.9,14.3 125.9,16.6 104.9,20.8" fill="#7b7b79" />
<polygon points="170.6,0.0 177.2,0.0 177.2,6.0 170.6,6.6" fill="#e6e5e1" />
<polygon points="175.0,0.0 177.0,0.0 177.0,5.6 175.3,5.8" fill="#3a4045" />
<polygon points="168.3,7.3 179.9,5.3 179.9,7.7 168.6,10.0" fill="#7b7b79" />
<polygon points="207.1,0.0 250.0,0.0 263.7,0.0 263.7,7.7 205.3,16.2 207.1,13.9" fill="#e6e5e1" />
<polygon points="211.8,0.0 250.0,0.0 263.7,0.0 263.7,7.3 212.6,14.3 212.4,14.3" fill="#3a4045" />
<polygon points="214.8,0.0 236.3,0.0 236.3,10.4 215.1,13.3" fill="#99a392" />
<polygon points="239.8,0.0 263.5,0.0 263.5,6.0 240.5,9.6" fill="#9aa693" />
<polygon points="214.9,0.0 235.8,0.0 235.8,10.4 214.9,13.3" fill="#98a291" />
<polygon points="205.1,15.9 250.0,9.3 263.7,7.7 263.7,10.4 205.3,18.6 205.5,18.6" fill="#77777a" />
<polygon points="57.1,56.0 67.7,54.7 74.3,111.0 63.7,111.0" fill="#f4f3f0" />
<polyline points="57.1,56.3 67.0,55.0" fill="none" stroke="#999" stroke-width="0.8" />
<polygon points="66.4,40.9 117.5,35.2 120.2,111.0 74.3,111.0" fill="#f9f9f7" />
<polygon points="116.8,35.2 145.1,38.8 146.0,63.7 150.0,111.0 119.2,111.0" fill="#e2e1de" />
<polyline points="66.4,40.6 116.8,34.7 145.1,38.4" fill="none" stroke="#858583" stroke-width="1.3" />
<polygon points="66.4,40.9 116.8,34.9 145.1,38.6 145.1,39.8 116.8,36.2 67.0,42.2" fill="#d8d8d5" />
<polygon points="63.7,111.0 120.2,111.0 124.1,145.8 106.2,142.9 104.9,126.9 74.3,124.3 74.3,117.4 64.5,118.3" fill="#f7f7f5" />
<polygon points="119.2,111.0 150.0,111.0 151.4,137.6 129.4,142.2 123.2,145.8" fill="#e3e2df" />
<polygon points="146.0,65.1 178.6,64.4 178.6,111.0 150.0,111.0" fill="#f0efeb" />
<polygon points="150.0,111.0 177.9,111.0 177.9,142.9 156.7,132.9 151.4,137.6" fill="#f0efeb" />
<polygon points="64.8,47.5 73.7,47.1 74.1,53.8 65.3,54.2" fill="#6e6e6c" />
<polygon points="69.7,53.8 72.8,53.8 78.3,111.0 75.0,111.0" fill="#7d7d7b" />
<polygon points="75.0,111.0 78.3,111.0 79.0,119.0 75.9,119.0" fill="#7d7d7b" />
<polygon points="68.0,79.7 71.0,79.7 74.3,111.0 71.3,111.0" fill="#3a4045" />
<polygon points="83.6,75.0 102.9,75.7 103.8,92.9 83.9,90.3" fill="#e3e3e0" />
<polygon points="90.3,75.1 103.0,75.8 103.8,92.3 91.6,90.7" fill="#384046" />
<polygon points="94.0,78.1 103.0,78.6 103.6,89.2 94.5,88.2" fill="#dededf" />
<polygon points="83.0,91.3 103.8,93.2 103.8,95.6 83.0,92.9" fill="#777" />
<polygon points="120.6,55.5 156.7,54.7 156.9,64.4 120.6,65.3" fill="#f3f3f1" />
<polygon points="156.7,54.7 179.9,46.7 180.3,63.5 156.9,64.4" fill="#e5e4e1" />
<polygon points="122.8,54.7 177.2,47.1 179.2,46.7 156.7,54.2" fill="#37393b" />
<polygon points="120.6,65.3 156.9,64.4 180.3,63.5 178.6,64.8 146.0,66.0 120.6,66.4" fill="#d5d4d0" />
<polygon points="148.4,75.7 176.6,76.3 177.2,111.0 150.0,111.0" fill="#e8e7e3" />
<polygon points="153.1,75.9 174.2,76.6 174.2,111.0 154.7,111.0" fill="#363e43" />
<polygon points="154.7,111.0 174.2,111.0 174.2,136.9 156.7,132.9 155.6,132.2" fill="#363e43" />
<polygon points="174.2,111.0 177.2,111.0 177.6,142.2 174.2,136.9" fill="#e8e7e3" />
<polyline points="168.0,107.5 171.9,107.5 171.9,111.0" fill="none" stroke="#aaa" stroke-width="0.8" />
<polygon points="187.9,87.0 192.8,87.2 192.8,94.5 187.9,94.3" fill="#9a9a98" />
<polygon points="206.5,76.3 250.0,77.7 260.8,78.3 260.8,111.0 206.5,111.0" fill="#e7e6e2" />
<polygon points="211.1,77.0 250.0,78.1 260.4,78.6 260.4,111.0 212.4,111.0" fill="#333b40" />
<polygon points="214.0,79.7 233.7,80.2 233.9,111.0 215.1,111.0" fill="#dcdcdb" />
<polygon points="238.2,80.6 259.5,81.3 259.5,111.0 238.2,111.0" fill="#9dab97" />
<polygon points="238.3,80.5 245.6,80.6 240.3,111.0 238.3,111.0" fill="#bfc4bd" />
<polygon points="205.1,111.0 250.0,111.0 258.4,111.0 258.4,121.6 205.3,114.3 205.1,113.4" fill="#6f7173" />
<polygon points="209.8,111.0 250.0,111.0 258.4,111.0 258.4,113.4 250.0,111.7" fill="#3b4246" />
<polygon points="0.0,126.7 74.3,116.6 74.3,134.9 0.0,151.5" fill="#e6e6e4" />
<polygon points="0.0,128.5 74.3,118.3 74.3,132.9 0.0,149.5" fill="#33363b" />
<polygon points="74.3,124.3 104.9,126.9 105.5,145.8 92.9,147.1 75.7,138.2" fill="#e9e9e7" />
<polygon points="74.3,124.3 92.9,128.9 92.9,147.1 75.7,138.2" fill="#dcdcda" />
<g filter="url(#b2)"><polygon points="78.3,113.7 86.3,111.0 98.2,112.3 100.9,125.6 92.9,128.3 78.3,124.3" fill="#5d7055" opacity=".95"/></g>
<polygon points="83.6,111.0 92.9,111.0 95.6,119.0 85.0,117.6" fill="#bfc2bd" opacity=".8"/>
<polygon points="0.0,188.7 122.8,145.8 129.4,142.6 158.0,153.2 178.6,143.3 250.0,163.0 291.6,171.4 269.7,206.9 200.0,183.4 152.7,167.8 34.8,222.0 0.0,222.0" fill="#d3d3d1" />
<polyline points="7.0,195.3 128.8,150.2" fill="none" stroke="#c2c2c0" stroke-width="0.5" />
<polyline points="13.9,202.0 134.8,154.6" fill="none" stroke="#c2c2c0" stroke-width="0.5" />
<polyline points="20.9,208.7 140.7,159.0" fill="none" stroke="#c2c2c0" stroke-width="0.5" />
<polyline points="27.8,215.3 146.7,163.4" fill="none" stroke="#c2c2c0" stroke-width="0.5" />
<polyline points="12.3,184.4 46.6,216.6" fill="none" stroke="#c2c2c0" stroke-width="0.5" />
<polyline points="24.6,180.1 58.4,211.2" fill="none" stroke="#c2c2c0" stroke-width="0.5" />
<polyline points="36.8,175.8 70.2,205.7" fill="none" stroke="#c2c2c0" stroke-width="0.5" />
<polyline points="49.1,171.5 81.9,200.3" fill="none" stroke="#c2c2c0" stroke-width="0.5" />
<polyline points="61.4,167.2 93.7,194.9" fill="none" stroke="#c2c2c0" stroke-width="0.5" />
<polyline points="73.7,162.9 105.5,189.5" fill="none" stroke="#c2c2c0" stroke-width="0.5" />
<polyline points="86.0,158.7 117.3,184.1" fill="none" stroke="#c2c2c0" stroke-width="0.5" />
<polyline points="98.2,154.4 129.1,178.7" fill="none" stroke="#c2c2c0" stroke-width="0.5" />
<polyline points="110.5,150.1 140.9,173.2" fill="none" stroke="#c2c2c0" stroke-width="0.5" />
<polyline points="0.0,187.7 122.8,145.1" fill="none" stroke="#ececea" stroke-width="1.6" />
<polyline points="150.0,168.4 35.6,222.0" fill="none" stroke="#ececea" stroke-width="1.8" />
<polyline points="154.0,167.8 250.0,199.7 269.7,206.3" fill="none" stroke="#ececea" stroke-width="1.8" />
<polyline points="269.7,206.9 291.6,171.4" fill="none" stroke="#dfdfdd" stroke-width="1.2" />
<polygon points="129.4,140.9 156.7,132.9 177.9,141.8 177.9,143.5 158.0,153.2 129.4,142.9" fill="#eeeeec" />
<polygon points="131.4,140.5 156.4,133.6 176.6,141.3 157.3,149.8" fill="#6c6c6b" />
<polygon points="182.5,139.5 195.1,140.2 192.2,151.2 185.8,151.2" fill="#2b2e31" /><g filter="url(#b2)"><polygon points="182.5,131.6 188.8,128.3 195.8,131.6 195.1,140.2 182.5,140.2" fill="#8a9a84" /></g>
<polygon points="267.0,158.1 284.3,158.8 281.4,173.4 270.4,173.4" fill="#2b2e31" /><g filter="url(#b2)"><polygon points="267.0,150.2 275.7,146.8 285.0,150.2 284.3,158.8 267.0,158.8" fill="#8a9a84" /></g>
<polygon points="147.1,156.1 152.4,156.1 152.9,176.1 147.6,176.1" fill="url(#lamp)" /><polygon points="147.1,153.2 152.4,153.2 152.4,156.1 147.1,156.1" fill="#111" /><polygon points="147.1,156.1 152.4,156.1 152.4,158.8 147.1,158.8" fill="#f4f4f4" />
<polygon points="90.3,138.5 95.1,138.5 95.6,154.1 90.8,154.1" fill="url(#lamp)" /><polygon points="90.3,135.6 95.1,135.6 95.1,138.5 90.3,138.5" fill="#111" /><polygon points="90.3,138.5 95.1,138.5 95.1,141.1 90.3,141.1" fill="#f4f4f4" />
<polygon points="57.1,129.6 61.3,129.6 61.9,141.5 57.6,141.5" fill="url(#lamp)" /><polygon points="57.1,126.7 61.3,126.7 61.3,129.6 57.1,129.6" fill="#111" /><polygon points="57.1,129.6 61.3,129.6 61.3,132.2 57.1,132.2" fill="#f4f4f4" />
<polygon points="13.9,116.3 17.7,116.3 18.2,124.3 14.5,124.3" fill="url(#lamp)" /><polygon points="13.9,113.4 17.7,113.4 17.7,116.3 13.9,116.3" fill="#111" /><polygon points="13.9,116.3 17.7,116.3 17.7,119.0 13.9,119.0" fill="#f4f4f4" />
<polygon points="247.6,186.3 252.9,186.3 253.5,205.9 248.1,205.9" fill="url(#lamp)" /><polygon points="247.6,183.4 252.9,183.4 252.9,186.3 247.6,186.3" fill="#111" /><polygon points="247.6,186.3 252.9,186.3 252.9,188.9 247.6,188.9" fill="#f4f4f4" />
<polygon points="248.1,186.3 254.7,186.3 255.2,204.6 248.6,204.6" fill="url(#lamp)" /><polygon points="248.1,183.4 254.7,183.4 254.7,186.3 248.1,186.3" fill="#111" /><polygon points="248.1,186.3 254.7,186.3 254.7,188.9 248.1,188.9" fill="#f4f4f4" />
<circle cx="387.3" cy="142.5" r="3.6" fill="#eee"/><circle cx="387.5" cy="142.5" r="1.2" fill="#444"/>
<g fill="#8f7a98" opacity=".75"><circle cx="336.9" cy="123.8" r="0.55"/><circle cx="327.3" cy="142.9" r="0.55"/><circle cx="349.3" cy="110.8" r="0.55"/><circle cx="345.4" cy="123.9" r="0.55"/><circle cx="317.4" cy="158.2" r="0.55"/><circle cx="341.3" cy="120.9" r="0.55"/><circle cx="331.9" cy="140.9" r="0.55"/><circle cx="346.2" cy="114.9" r="0.55"/><circle cx="325.5" cy="129.3" r="0.55"/><circle cx="333.0" cy="138.9" r="0.55"/><circle cx="329.4" cy="150.4" r="0.55"/><circle cx="317.9" cy="157.4" r="0.55"/><circle cx="309.1" cy="158.6" r="0.55"/><circle cx="345.4" cy="122.8" r="0.55"/><circle cx="320.6" cy="146.0" r="0.55"/><circle cx="328.8" cy="132.9" r="0.55"/><circle cx="333.1" cy="144.3" r="0.55"/><circle cx="321.6" cy="164.8" r="0.55"/><circle cx="316.6" cy="149.9" r="0.55"/><circle cx="321.5" cy="165.1" r="0.55"/><circle cx="316.2" cy="152.1" r="0.55"/><circle cx="321.9" cy="141.2" r="0.55"/><circle cx="326.4" cy="157.0" r="0.55"/><circle cx="317.3" cy="154.3" r="0.55"/><circle cx="339.4" cy="128.9" r="0.55"/><circle cx="344.2" cy="111.7" r="0.55"/><circle cx="318.3" cy="152.6" r="0.55"/><circle cx="313.5" cy="167.7" r="0.55"/><circle cx="326.1" cy="128.7" r="0.55"/><circle cx="336.8" cy="112.4" r="0.55"/><circle cx="318.4" cy="143.2" r="0.55"/><circle cx="313.4" cy="161.2" r="0.55"/><circle cx="313.7" cy="160.8" r="0.55"/><circle cx="330.2" cy="140.4" r="0.55"/><circle cx="328.5" cy="143.9" r="0.55"/><circle cx="326.6" cy="140.2" r="0.55"/><circle cx="332.4" cy="126.2" r="0.55"/><circle cx="328.4" cy="138.1" r="0.55"/><circle cx="332.2" cy="132.2" r="0.55"/><circle cx="327.0" cy="143.6" r="0.55"/><circle cx="323.6" cy="146.7" r="0.55"/><circle cx="336.5" cy="131.6" r="0.55"/><circle cx="334.5" cy="112.9" r="0.55"/><circle cx="309.3" cy="164.5" r="0.55"/><circle cx="321.9" cy="143.5" r="0.55"/><circle cx="331.4" cy="128.8" r="0.55"/><circle cx="331.9" cy="128.8" r="0.55"/><circle cx="343.9" cy="113.4" r="0.55"/><circle cx="328.8" cy="129.5" r="0.55"/><circle cx="330.3" cy="124.1" r="0.55"/><circle cx="314.7" cy="149.2" r="0.55"/><circle cx="339.4" cy="129.4" r="0.55"/><circle cx="311.1" cy="158.1" r="0.55"/><circle cx="330.7" cy="147.1" r="0.55"/><circle cx="329.5" cy="123.7" r="0.55"/><circle cx="343.3" cy="123.0" r="0.55"/><circle cx="333.7" cy="122.5" r="0.55"/><circle cx="329.5" cy="146.2" r="0.55"/><circle cx="335.6" cy="119.4" r="0.55"/><circle cx="332.3" cy="125.8" r="0.55"/><circle cx="27.2" cy="96.2" r="0.5"/><circle cx="53.8" cy="91.1" r="0.5"/><circle cx="5.2" cy="106.9" r="0.5"/><circle cx="51.6" cy="107.7" r="0.5"/><circle cx="28.0" cy="107.0" r="0.5"/><circle cx="54.2" cy="92.4" r="0.5"/><circle cx="44.5" cy="104.7" r="0.5"/><circle cx="40.1" cy="98.4" r="0.5"/><circle cx="20.3" cy="94.8" r="0.5"/><circle cx="17.1" cy="89.4" r="0.5"/><circle cx="36.2" cy="93.7" r="0.5"/><circle cx="47.9" cy="88.9" r="0.5"/><circle cx="52.9" cy="101.9" r="0.5"/><circle cx="54.0" cy="105.9" r="0.5"/><circle cx="52.7" cy="99.5" r="0.5"/><circle cx="5.7" cy="102.9" r="0.5"/><circle cx="14.1" cy="94.0" r="0.5"/><circle cx="40.1" cy="98.5" r="0.5"/><circle cx="26.9" cy="106.8" r="0.5"/><circle cx="37.4" cy="94.8" r="0.5"/><circle cx="18.4" cy="105.2" r="0.5"/><circle cx="30.3" cy="103.6" r="0.5"/><circle cx="23.6" cy="91.9" r="0.5"/><circle cx="33.3" cy="104.3" r="0.5"/><circle cx="14.1" cy="103.8" r="0.5"/><circle cx="53.9" cy="104.1" r="0.5"/><circle cx="48.6" cy="88.2" r="0.5"/><circle cx="38.3" cy="105.3" r="0.5"/><circle cx="7.6" cy="93.4" r="0.5"/><circle cx="19.2" cy="98.5" r="0.5"/><circle cx="27.4" cy="97.5" r="0.5"/><circle cx="46.2" cy="88.0" r="0.5"/><circle cx="7.9" cy="90.5" r="0.5"/><circle cx="11.6" cy="89.4" r="0.5"/><circle cx="56.7" cy="105.1" r="0.5"/><circle cx="9.6" cy="98.0" r="0.5"/><circle cx="21.7" cy="94.3" r="0.5"/><circle cx="23.6" cy="100.9" r="0.5"/><circle cx="36.1" cy="95.2" r="0.5"/><circle cx="15.1" cy="94.6" r="0.5"/><circle cx="347.8" cy="82.3" r="0.5"/><circle cx="337.6" cy="101.1" r="0.5"/><circle cx="343.4" cy="80.9" r="0.5"/><circle cx="345.1" cy="90.2" r="0.5"/><circle cx="336.7" cy="103.3" r="0.5"/><circle cx="339.7" cy="103.9" r="0.5"/><circle cx="341.3" cy="92.1" r="0.5"/><circle cx="344.8" cy="94.1" r="0.5"/><circle cx="345.7" cy="91.7" r="0.5"/><circle cx="339.2" cy="93.0" r="0.5"/><circle cx="344.2" cy="95.4" r="0.5"/><circle cx="346.8" cy="80.6" r="0.5"/><circle cx="348.1" cy="91.9" r="0.5"/><circle cx="334.6" cy="108.2" r="0.5"/><circle cx="340.6" cy="106.9" r="0.5"/><circle cx="344.7" cy="86.7" r="0.5"/><circle cx="351.2" cy="82.3" r="0.5"/><circle cx="345.0" cy="99.4" r="0.5"/><circle cx="340.4" cy="103.6" r="0.5"/><circle cx="339.8" cy="101.7" r="0.5"/><circle cx="348.5" cy="81.6" r="0.5"/><circle cx="343.9" cy="78.5" r="0.5"/><circle cx="332.4" cy="103.0" r="0.5"/><circle cx="342.2" cy="81.3" r="0.5"/><circle cx="332.7" cy="106.4" r="0.5"/><circle cx="352.9" cy="79.1" r="0.5"/><circle cx="351.7" cy="82.2" r="0.5"/><circle cx="344.2" cy="99.8" r="0.5"/><circle cx="337.1" cy="108.7" r="0.5"/><circle cx="331.9" cy="103.8" r="0.5"/><circle cx="338.7" cy="102.8" r="0.5"/><circle cx="334.0" cy="101.1" r="0.5"/><circle cx="344.5" cy="102.2" r="0.5"/><circle cx="345.6" cy="80.3" r="0.5"/><circle cx="345.6" cy="96.3" r="0.5"/></g>
</g>
<g>
<path d="M89 222V204Q89 200 93 200H177Q181 200 181 204V222Z" fill="#555"/>
<path d="M195 222V204Q195 200 199 200H252Q256 200 256 204V222Z" fill="#555"/>
<path d="M270.3 222V204Q270.3 200 274.3 200H296Q300 200 300 204V222Z" fill="#555"/>
<path d="M119.5 203V219M150.5 203V219M225.5 203V219" stroke="#999" stroke-width="0.8"/>
<g fill="none" stroke="#fff" stroke-width="1.1">
<path d="M97.5 217.5Q98 213.5 102 212.8Q99.3 210.5 99.6 207.5Q100 204 103.5 204Q107 204 107.3 207.5Q107.6 210.5 105 212.8Q109 213.5 109.7 217.5Z"/>
<path d="M100 207.5Q103 207.8 104.5 206Q106 207.8 107.2 207.8" stroke-width=".8"/>
<path d="M161.5 204.5V217.5M164.2 204.5V217.5H161.5M161.5 204.5H172.5V209.5H164.2M164.2 206.7H172.5" stroke-width="1.1"/>
<circle cx="208.5" cy="209.5" r="4.6" stroke-width="1.3"/><path d="M212 213L217 218.3" stroke-width="1.6"/><path d="M206.3 209.5H210.7M208.5 207.3V211.7" stroke-width="1.2"/>
<circle cx="239.5" cy="209.5" r="4.6" stroke-width="1.3"/><path d="M243 213L248 218.3" stroke-width="1.6"/><path d="M237.3 209.5H241.7" stroke-width="1.2"/>
<path d="M279.8 209Q279.8 204 285 204Q290.2 204 290.2 209V213Q290.2 218.5 285 218.5Q279.8 218.5 279.8 213Z M285 204V209.5M279.8 209.5H290.2" stroke="#ddd" stroke-width="1"/>
</g>
<g fill="none" stroke="#1aa5ad" stroke-width="0.8">
<path d="M128.5 209L136 204.5L144.5 207.5V213.5L135 218L128.5 215ZM128.5 209L135 212V218M135 212L144.5 207.5M131.5 207.2L137.8 210.2M137.8 210.2V213.3M132 213.5L138.5 210" />
</g>
</g>
</svg>
</div>
<div id="panel">
<div class="abs" style="left:-1515px;top:-266px;width:1908px;height:836px">
<div class="abs" style="left:1525px;top:276px;width:190px;height:30px;background:#464646;border-top:3px solid #00aaa5"></div>
<div class="abs" style="left:1525px;top:305.5px;width:380px;height:531px;background:#464646"></div>
<svg class="ic" style="left:1530px;top:278px" width="30" height="26" viewBox="1530 278 30 26" stroke-width="0.7">
<path d="M1535 289L1546 282.3L1549.5 284.2Q1548 286.5 1551 287.3L1553.5 288.8L1543.2 295Z"/>
<path d="M1535 289V294.5L1543.2 300.3L1553.5 294.2V288.8M1543.2 295V300.3M1535 290.8L1543.2 296.8L1553.5 290.6M1535 292.6L1543.2 298.6L1553.5 292.4"/>
</svg>
<div class="abs pt" style="left:1563.3px;top:283px;font-size:14px;line-height:18px;letter-spacing:-0.35px">Level</div>
<div class="abs pt" style="-webkit-text-stroke:0.12px #fff;left:1535.3px;top:316.5px;font-size:18px;line-height:22px;letter-spacing:0.02px">Edit Ground floor</div>
<div class="abs" style="left:1805px;top:316px;width:90px;height:90px;background:#555;border:1px solid #fff"></div>
<svg class="ic" style="left:1805px;top:316px" width="90" height="90" viewBox="1805 316 90 90" stroke-width="1">
<path d="M1849.8 333.6L1866.7 343.2L1857 349.7L1885.7 365.8L1861.7 379.2L1815 352.6Z"/>
<path d="M1815 352.6V361.2L1861.7 387.4L1885.7 374.1V365.8M1861.7 379.2V387.4M1866.7 343.2V348.5L1860.5 351.7"/>
</svg>
<div class="abs" style="left:1535px;top:384px;width:80px;height:30px;background:#575757;border-top:3px solid #00aaa5"></div>
<div class="abs" style="left:1535px;top:413.5px;width:360px;height:423px;background:#575757"></div>
<svg class="abs" style="left:1565px;top:390px" width="20" height="20" viewBox="0 0 20 20"><circle cx="10" cy="10" r="8.2" fill="none" stroke="#fff" stroke-width="1.4"/><path d="M10 8.8V14.2" stroke="#fff" stroke-width="1.7"/><circle cx="10" cy="6.2" r="1.05" fill="#fff"/></svg>
<div class="abs pt" style="-webkit-text-stroke:0.12px #fff;left:1565.3px;top:429.5px;font-size:18px;line-height:22px;letter-spacing:0.3px">Information</div>
<div class="abs" style="left:1565.3px;top:466.5px;font-size:11.5px;line-height:14px;color:#aaa">Name</div>
<div class="abs pt" style="left:1565.3px;top:482.5px;font-size:12px;line-height:14px;letter-spacing:0.08px">Ground floor</div>
<div class="abs" style="left:1565px;top:500.7px;width:150px;height:1px;background:#aaa"></div>
<div class="abs" style="left:1565px;top:532px;width:300px;height:1.6px;background:#b0b0b0"></div>
<div class="abs pt" style="-webkit-text-stroke:0.12px #fff;left:1565.3px;top:547.5px;font-size:18px;line-height:22px;letter-spacing:-0.2px">Dimensions</div>

<div class="dot" style="top:586.7px;background:#d4822a"></div>
<div class="abs fl" style="top:584.5px;color:#999">Level height</div>
<div class="abs fv" style="top:601px;color:#999;-webkit-text-stroke:0">8'-10 1/4"</div>
<div class="ul" style="top:619px"></div>

<div class="dot" style="top:637.8px;background:#3d9ae8"></div>
<div class="abs fl" style="top:635.5px">Ceiling thickness</div>
<div class="abs fv" style="top:652px">0"</div>
<div class="ul" style="top:670px"></div>
<svg class="abs" style="left:1704px;top:645px" width="12" height="18" viewBox="0 0 12 18"><path d="M6 0.8L11 6.8H1ZM6 16.4L11 10.4H1Z" fill="#fff"/></svg>

<div class="dot" style="top:688.8px;background:#6ab04c"></div>
<div class="abs fl" style="top:686.5px">Height under ceiling</div>
<div class="abs fv" style="top:703px">8'-2 1/2"</div>
<div class="ul" style="top:721px"></div>
<svg class="abs" style="left:1704px;top:696px" width="12" height="18" viewBox="0 0 12 18"><path d="M6 0.8L11 6.8H1ZM6 16.4L11 10.4H1Z" fill="#fff"/></svg>

<div class="dot" style="top:739.8px;background:#f0e614"></div>
<div class="abs fl" style="top:737.5px">Finished floor thickness</div>
<div class="abs fv" style="top:754px">6"</div>
<div class="ul" style="top:772px"></div>
<svg class="abs" style="left:1704px;top:747px" width="12" height="18" viewBox="0 0 12 18"><path d="M6 0.8L11 6.8H1ZM6 16.4L11 10.4H1Z" fill="#fff"/></svg>

<div class="dot" style="top:790.8px;background:#e66a6a"></div>
<div class="abs fl" style="top:788.5px">Slab thickness</div>
<div class="abs fv" style="top:805px">2"</div>
<div class="ul" style="top:823px"></div>
<svg class="abs" style="left:1704px;top:798px" width="12" height="18" viewBox="0 0 12 18"><path d="M6 0.8L11 6.8H1ZM6 16.4L11 10.4H1Z" fill="#fff"/></svg>

<svg class="abs" style="left:1745px;top:648px" width="120" height="110" viewBox="1745 648 120 110">
<defs><pattern id="hat" patternUnits="userSpaceOnUse" width="4" height="4" patternTransform="rotate(-45)"><rect width="4" height="4" fill="#3a3a3a"/><rect width="4" height="1.5" fill="#eee"/></pattern></defs>
<path d="M1752.5 652.6V752.1M1748.8 652.9H1756.2M1748.8 751.8H1756.2" stroke="#d4822a" stroke-width="1.5" fill="none"/>
<rect x="1762" y="653" width="11.3" height="88" fill="url(#hat)" stroke="#eee" stroke-width="1"/>
<rect x="1773.3" y="653.1" width="88" height="9" fill="#3d9ae8" stroke="#e8e8e8" stroke-width="0.8"/>
<rect x="1773.3" y="732.4" width="88" height="8.6" fill="#f0e614" stroke="#e8e8e8" stroke-width="0.6"/>
<rect x="1762" y="741.1" width="99.3" height="10.8" fill="#e66a6a" stroke="#e8e8e8" stroke-width="0.6"/>
<path d="M1781.8 664.5V731M1779 668L1781.8 664L1784.6 668M1779 727.5L1781.8 731.5L1784.6 727.5" stroke="#6ab04c" stroke-width="1.3" fill="none"/>
<path d="M1794 732V673.5H1825.5V732M1797.2 732V676.7H1822.4V732" stroke="#999" stroke-width="1" fill="none"/>
<circle cx="1802" cy="703.4" r="0.9" fill="#999"/>
</svg>
</div>

</div>
</body></html>
